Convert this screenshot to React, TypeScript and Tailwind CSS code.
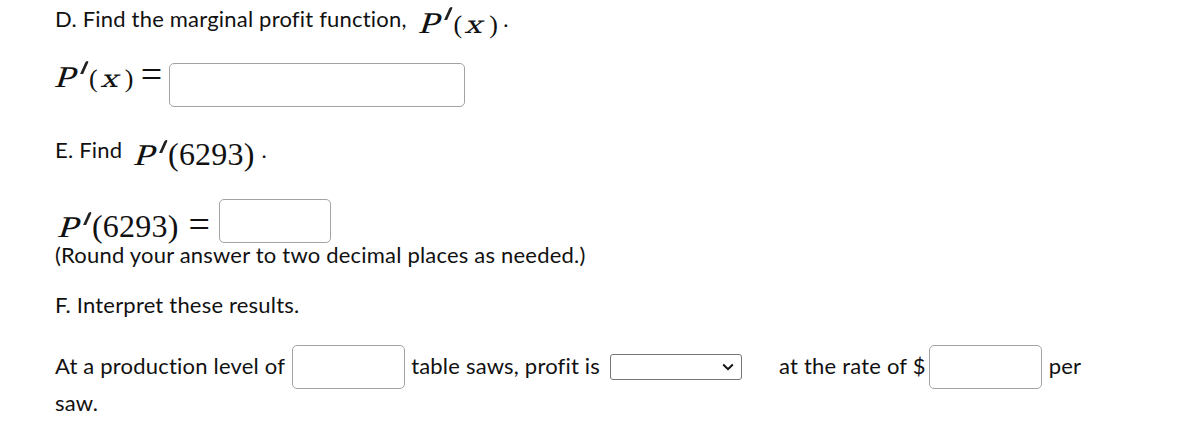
import React from "react";

function Prime({ lift }: { lift: string }) {
  return (
    <span
      className={`inline-block w-[3px] h-[13px] bg-[#222] skew-x-[-24deg] rounded-t-[2px] ml-[4px] mr-[3px] ${lift}`}
    />
  );
}

function PPrime({ lift }: { lift: string }) {
  return (
    <>
      <span className="inline-block w-[27px] text-[30px] scale-x-[1.25] -skew-x-[14deg] origin-bottom-left">
        P
      </span>
      <Prime lift={lift} />
    </>
  );
}

function MathPx() {
  return (
    <span className="font-['Liberation_Serif',serif] text-[#111] whitespace-nowrap">
      <PPrime lift="align-[13px]" />
      <span className="text-[26px]">
        (
        <span className="inline-block w-[27px] text-center font-['DejaVu_Serif',serif] text-[24px] scale-x-[1.3] -skew-x-[14deg]">
          x
        </span>
        )
      </span>
    </span>
  );
}

function MathPn() {
  return (
    <span className="font-['Liberation_Serif',serif] text-[#111] whitespace-nowrap">
      <PPrime lift="align-[12px]" />
      <span className="text-[32px]">(6293)</span>
    </span>
  );
}

function Box({ w }: { w: string }) {
  return (
    <input
      type="text"
      className={`${w} h-[44px] border border-[#a3a3a3] rounded-[5px] bg-white outline-none`}
    />
  );
}

export default function App() {
  return (
    <div className="font-['Lato',sans-serif] text-[22px] tracking-[0.2px] [font-variant-ligatures:none] text-[#111] px-[55px] pt-[4px] bg-white min-h-[441px]">
      <p className="leading-[30px]">
        D. Find the marginal profit function,{" "}
        <span className="align-[-6px] ml-[4px]">
          <MathPx />
        </span>
        <span className="ml-[5px]">.</span>
      </p>

      <div className="flex items-start mt-[22px] h-[44px]">
        <span className="leading-none -mt-[8px] -ml-[3px] font-['Liberation_Serif',serif]">
          <MathPx />
          <span className="text-[38px] ml-[7px] mr-[7px]">=</span>
        </span>
        <Box w="w-[296px]" />
      </div>

      <p className="leading-[30px] mt-[28px]">
        E. Find{" "}
        <span className="align-[-7px] ml-[3px]">
          <MathPn />
        </span>
        <span className="ml-[7px]">.</span>
      </p>

      <div className="flex items-start mt-[26px] h-[44px]">
        <span className="leading-none mt-[6px] font-['Liberation_Serif',serif]">
          <MathPn />
          <span className="text-[38px] ml-[10px] mr-[9px]">=</span>
        </span>
        <Box w="w-[112px]" />
      </div>

      <p className="leading-[30px] -mt-[3px]">
        (Round your answer to two decimal places as needed.)
      </p>

      <p className="leading-[30px] mt-[20px]">F. Interpret these results.</p>

      <div className="flex items-center mt-[25px] h-[44px] whitespace-nowrap">
        <span className="-mt-[3px]">At a production level of</span>
        <span className="ml-[7px]">
          <Box w="w-[113px]" />
        </span>
        <span className="ml-[6px] -mt-[3px]">table saws, profit is</span>
        <div className="ml-[10px] w-[132px] h-[26px] border border-[#767676] rounded-[3px] bg-white flex items-center justify-end pr-[7px]">
          <svg width="12" height="8" viewBox="0 0 12 8" fill="none">
            <path d="M1.2 1.5l4.8 4.6 4.8-4.6" stroke="#111" strokeWidth="2" />
          </svg>
        </div>
        <span className="ml-[37px] -mt-[3px]">at the rate of $</span>
        <span className="ml-[3px]">
          <Box w="w-[113px]" />
        </span>
        <span className="ml-[7px] -mt-[3px]">per</span>
      </div>
      <p className="leading-[30px] -mt-[1px]">saw.</p>
    </div>
  );
}
